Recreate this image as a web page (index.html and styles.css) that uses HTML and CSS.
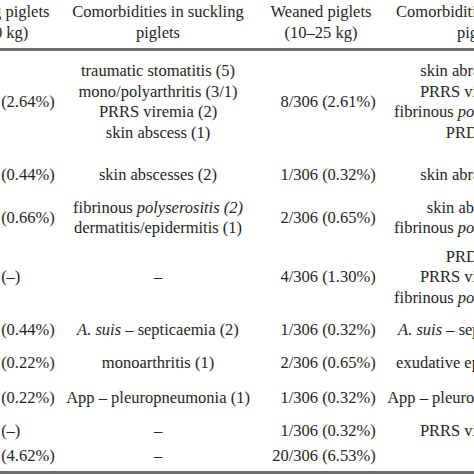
FILE: index.html
```html
<!DOCTYPE html>
<html lang="en">
<head>
<meta charset="utf-8">
<title>Comorbidities table</title>
<link rel="stylesheet" href="styles.css">
</head>
<body>
<div class="sheet">
<table class="tbl">
  <colgroup>
    <col class="col-a"><col class="col-b"><col class="col-c"><col class="col-d">
  </colgroup>
  <thead>
    <tr>
      <th>Suckling piglets<br>(0–10 kg)</th>
      <th>Comorbidities in suckling<br>piglets</th>
      <th>Weaned piglets<br>(10–25 kg)</th>
      <th>Comorbidities in weaned<br>piglets</th>
    </tr>
  </thead>
  <tbody>
    <tr class="r1">
      <td class="n"><span class="c">12/454</span> <span class="p">(2.64%)</span></td>
      <td>traumatic stomatitis (5)<br>mono/polyarthritis (3/1)<br>PRRS viremia (2)<br>skin abscess (1)</td>
      <td class="n"><span class="c">8/306</span> <span class="p">(2.61%)</span></td>
      <td>skin abrasions (3)<br>PRRS viremia (2)<br>fibrinous <i>polyserositis</i> (1)<br>PRDC (1)</td>
    </tr>
    <tr class="r2">
      <td class="n"><span class="c">2/454</span> <span class="p">(0.44%)</span></td>
      <td>skin abscesses (2)</td>
      <td class="n"><span class="c">1/306</span> <span class="p">(0.32%)</span></td>
      <td>skin abrasions (1)</td>
    </tr>
    <tr class="r3">
      <td class="n"><span class="c">3/454</span> <span class="p">(0.66%)</span></td>
      <td>fibrinous <i>polyserositis (2)</i><br>dermatitis/epidermitis (1)</td>
      <td class="n"><span class="c">2/306</span> <span class="p">(0.65%)</span></td>
      <td>skin abscess (1)<br>fibrinous <i>polyserositis</i> (1)</td>
    </tr>
    <tr class="r4">
      <td class="n"><span class="c">0/454</span> <span class="p">(–)</span></td>
      <td>–</td>
      <td class="n"><span class="c">4/306</span> <span class="p">(1.30%)</span></td>
      <td>PRDC (2)<br>PRRS viremia (1)<br>fibrinous <i>polyserositis</i> (1)</td>
    </tr>
    <tr class="r5">
      <td class="n"><span class="c">2/454</span> <span class="p">(0.44%)</span></td>
      <td><i>A. suis</i> – septicaemia (2)</td>
      <td class="n"><span class="c">1/306</span> <span class="p">(0.32%)</span></td>
      <td><i>A. suis</i> – septicaemia (1)</td>
    </tr>
    <tr class="r6">
      <td class="n"><span class="c">1/454</span> <span class="p">(0.22%)</span></td>
      <td>monoarthritis (1)</td>
      <td class="n"><span class="c">2/306</span> <span class="p">(0.65%)</span></td>
      <td>exudative epidermitis (2)</td>
    </tr>
    <tr class="r7">
      <td class="n"><span class="c">1/454</span> <span class="p">(0.22%)</span></td>
      <td>App – pleuropneumonia (1)</td>
      <td class="n"><span class="c">1/306</span> <span class="p">(0.32%)</span></td>
      <td>App – pleuropneumonia (1)</td>
    </tr>
    <tr class="r8">
      <td class="n"><span class="c">0/454</span> <span class="p">(–)</span></td>
      <td>–</td>
      <td class="n"><span class="c">1/306</span> <span class="p">(0.32%)</span></td>
      <td>PRRS viremia (1)</td>
    </tr>
    <tr class="r9">
      <td class="n"><span class="c">21/454</span> <span class="p">(4.62%)</span></td>
      <td>–</td>
      <td class="n"><span class="c">20/306</span> <span class="p">(6.53%)</span></td>
      <td>–</td>
    </tr>
  </tbody>
</table>
</div>
</body>
</html>
```
FILE: styles.css
```css
html, body {
  margin: 0;
  padding: 0;
  background: #ffffff;
}
body {
  width: 474px;
  height: 474px;
  overflow: hidden;
  font-family: "Liberation Serif", "Times New Roman", serif;
  font-size: 16.5px;
  color: #262626;
}
.sheet {
  margin-left: -66px;
  width: 640px;
}
.tbl {
  width: 640px;
  table-layout: fixed;
  border-collapse: collapse;
  border-bottom: 6px solid #6e6e6e;
}
.col-a { width: 124px; }
.col-b { width: 200px; }
.col-c { width: 126px; }
.col-d { width: 190px; }

.tbl th {
  font-weight: normal;
  text-align: center;
  line-height: 21px;
  padding: 1px 0 5px;
  border-bottom: 3px solid #6e6e6e;
  white-space: nowrap;
}
.tbl td {
  text-align: center;
  vertical-align: middle;
  line-height: 20.5px;
  padding: 6px 0;
  white-space: nowrap;
}
.tbl tr.r1 td { padding-top: 10px; padding-bottom: 16px; }
.tbl tr.r3 td { padding-bottom: 3px; }
.tbl tr.r4 td { padding-top: 5px; }
.tbl tr.r6 td { padding-bottom: 8px; }
.tbl tr.r7 td { padding-top: 7px; }
.tbl tr.r8 td { padding-bottom: 2px; }
.tbl tr.r9 td { padding-top: 3px; padding-bottom: 4px; }

.tbl td.n { text-align: left; }
.c {
  display: inline-block;
  text-align: right;
}
.tbl td:nth-child(1) .c { width: 63px; }
.tbl td:nth-child(3) .c { width: 60px; }
.p {
  display: inline-block;
  text-align: left;
}
```
